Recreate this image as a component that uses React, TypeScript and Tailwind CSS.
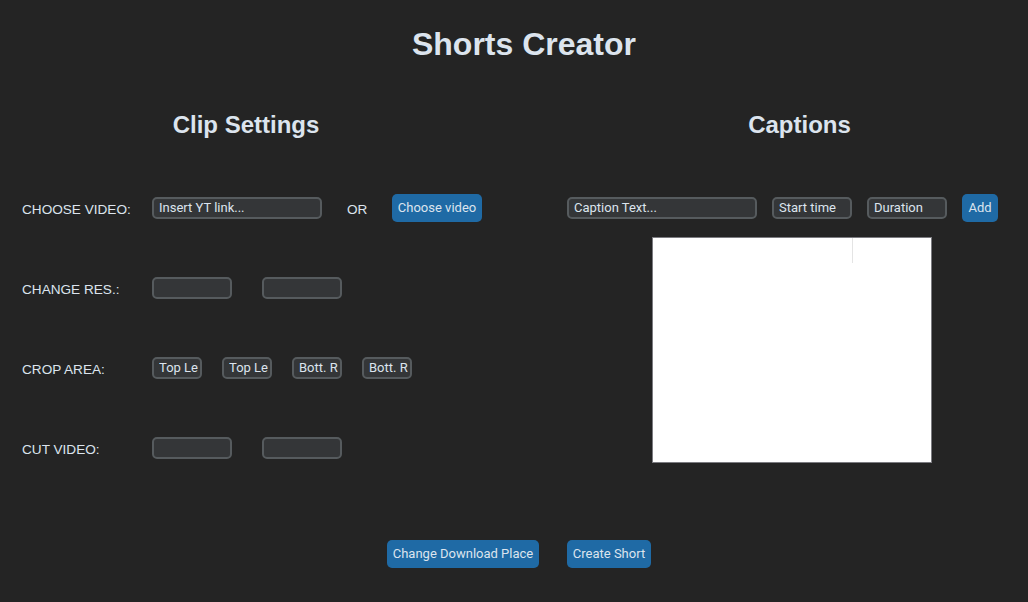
import React from "react";

const label = "mt-[4px] w-[130px] shrink-0 text-[13.6px] text-[#dce4ee] [font-family:'Liberation_Sans',Arial,sans-serif]";
const entry =
  "h-[22px] shrink-0 rounded-[5px] border-2 border-[#565b5e] bg-[#343638] pl-[5px] pr-[2px] text-[13px] leading-[18px] text-[#dce4ee] [font-family:Roboto,sans-serif]";
const btn =
  "h-[28px] shrink-0 rounded-[5px] bg-[#1f6aa5] text-[13px] text-[#dce4ee] [font-family:Roboto,sans-serif] flex items-center justify-center";

function Entry({ w, text }: { w: string; text?: string }) {
  return (
    <div className={`${entry} ${w}`}>
      <div className="overflow-hidden whitespace-nowrap">{text}</div>
    </div>
  );
}

function Row({ name, children }: { name: string; children: React.ReactNode }) {
  return (
    <div className="flex h-[80px] items-center pl-[22px]">
      <div className={label}>{name}</div>
      {children}
    </div>
  );
}

export default function App() {
  return (
    <div className="h-[602px] w-[1028px] overflow-hidden bg-[#242424]">
      <div className="flex h-[88px] items-center justify-center pl-[20px]">
        <h1 className="text-[32px] font-bold text-[#dce4ee] [font-family:'Liberation_Sans',Arial,sans-serif]">
          Shorts Creator
        </h1>
      </div>

      <div className="flex">
        <div className="w-[490px] shrink-0">
          <div className="flex h-[80px] items-center justify-center pb-[6px] pl-[2px]">
            <h2 className="text-[24px] font-bold text-[#dce4ee] [font-family:'Liberation_Sans',Arial,sans-serif]">
              Clip Settings
            </h2>
          </div>
          <Row name="CHOOSE VIDEO:">
            <Entry w="w-[170px]" text="Insert YT link..." />
            <div className="ml-[25px] mt-[4px] w-[45px] text-[13.6px] text-[#dce4ee] [font-family:'Liberation_Sans',Arial,sans-serif]">OR</div>
            <button className={`${btn} w-[90px]`}>Choose video</button>
          </Row>
          <Row name="CHANGE RES.:">
            <div className="flex gap-[30px]">
              <Entry w="w-[80px]" />
              <Entry w="w-[80px]" />
            </div>
          </Row>
          <Row name="CROP AREA:">
            <div className="flex gap-[20px]">
              <Entry w="w-[50px]" text="Top Left X" />
              <Entry w="w-[50px]" text="Top Left Y" />
              <Entry w="w-[50px]" text="Bott. Right X" />
              <Entry w="w-[50px]" text="Bott. Right Y" />
            </div>
          </Row>
          <Row name="CUT VIDEO:">
            <div className="flex gap-[30px]">
              <Entry w="w-[80px]" />
              <Entry w="w-[80px]" />
            </div>
          </Row>
        </div>

        <div className="ml-[67px] flex-1">
          <div className="flex h-[80px] items-center justify-center pb-[6px] pl-[14px]">
            <h2 className="text-[24px] font-bold text-[#dce4ee] [font-family:'Liberation_Sans',Arial,sans-serif]">
              Captions
            </h2>
          </div>
          <div className="mt-[26px] flex items-center gap-[15px] pl-[10px]">
            <Entry w="w-[190px]" text="Caption Text..." />
            <Entry w="w-[80px]" text="Start time" />
            <Entry w="w-[80px]" text="Duration" />
            <button className={`${btn} w-[36px]`}>Add</button>
          </div>
          <div className="relative ml-[95px] mt-[15px] h-[226px] w-[280px] border border-[#7b7b80] bg-white">
            <div className="absolute left-[199px] top-0 h-[25px] w-px bg-[#e4e4e4]" />
          </div>
        </div>
      </div>

      <div className="mt-[52px] flex justify-center gap-[28px] pl-[10px]">
        <button className={`${btn} w-[152px]`}>Change Download Place</button>
        <button className={`${btn} w-[84px]`}>Create Short</button>
      </div>
    </div>
  );
}
